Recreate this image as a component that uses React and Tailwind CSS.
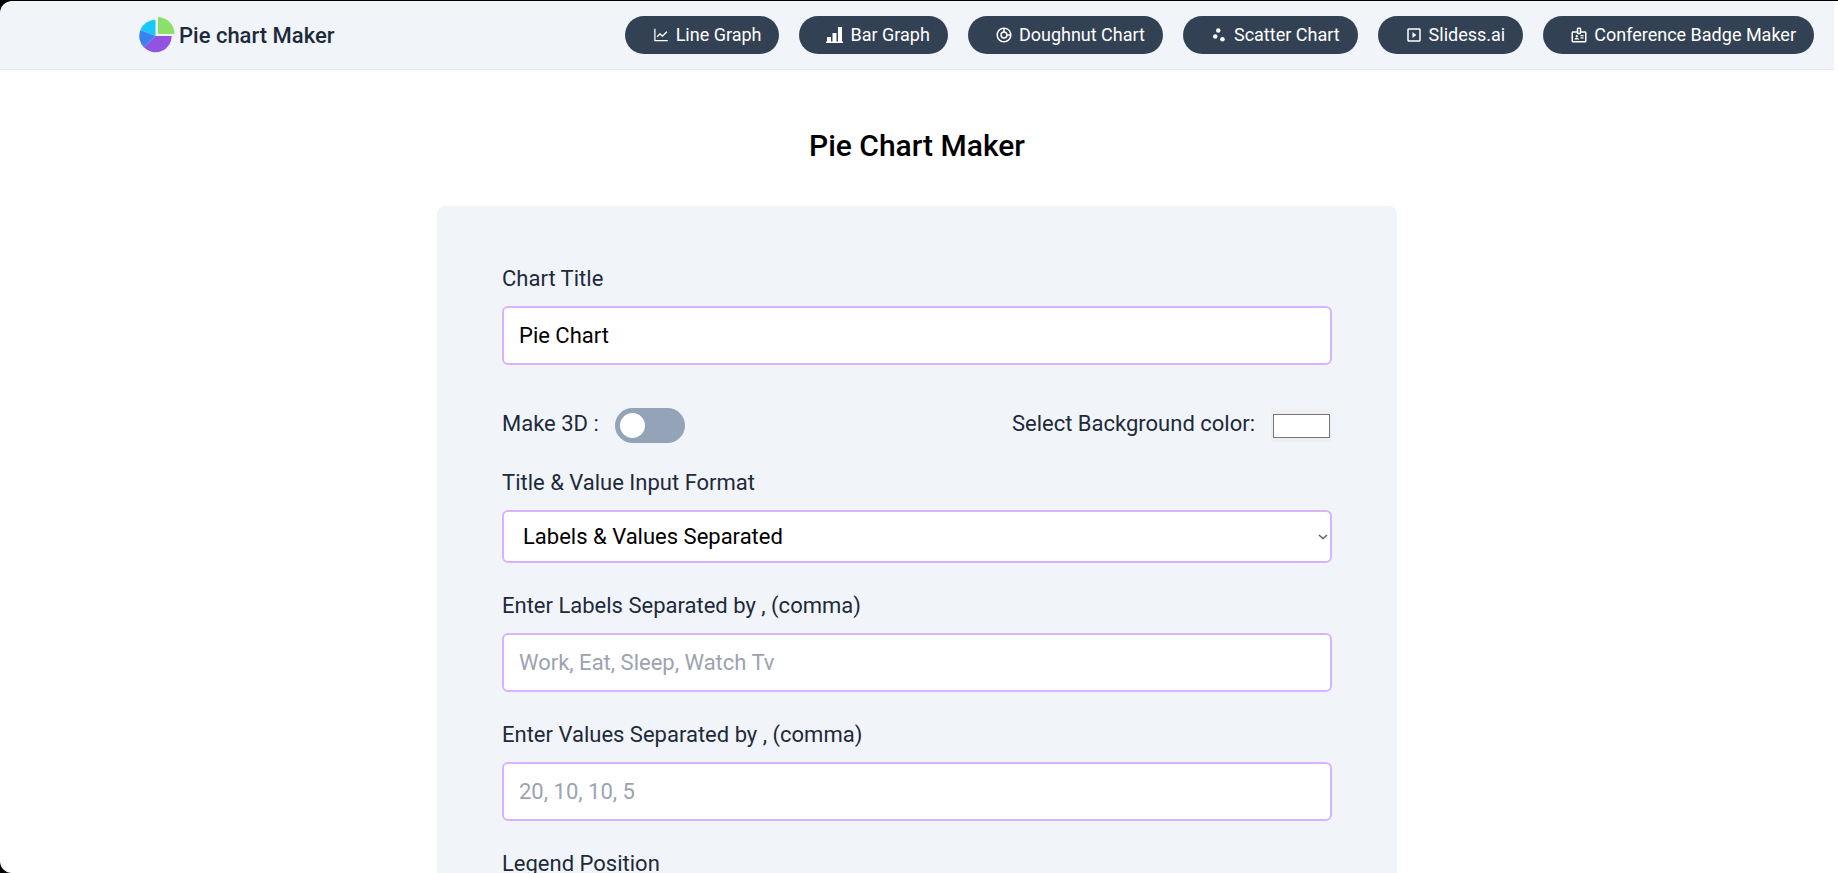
import { useState } from 'react';
import { AiOutlineLineChart } from 'react-icons/ai';
import { BiDoughnutChart } from 'react-icons/bi';
import { MdOutlineBadge, MdOutlineSlideshow, MdScatterPlot } from 'react-icons/md';

// ─── Icons ───────────────────────────────────────────────────────────────────
function BarsIcon({ size = 18 }) {
  return (
    <svg width={size} height={size} viewBox="0 0 18 18" fill="currentColor" aria-hidden="true">
      <path d="M0 15.500h17V17H0zM1 11h4v5H1zM6.500 7h4v9h-4zM12 1h4v15h-4z" />
    </svg>
  );
}

function PieLogo() {
  return (
    <svg width="36" height="36" viewBox="0 0 36 36" aria-hidden="true">
      <path d="M16.500 19V2.800A16.200 16.200 0 0 0 1.400 13z" fill="#18c8fb" />
      <path d="M16.500 19 1.400 13A16.200 16.200 0 0 0 5 30.500z" fill="#3b82f0" />
      <path d="M16.500 19 5 30.500A16.200 16.200 0 0 0 32.700 19z" fill="#9153e0" />
      <path d="M19 17V0A17 17 0 0 1 35.500 17z" fill="#8ce06a" />
    </svg>
  );
}

const NAV_LINKS = [
  { label: 'Line Graph', icon: AiOutlineLineChart },
  { label: 'Bar Graph', icon: BarsIcon },
  { label: 'Doughnut Chart', icon: BiDoughnutChart },
  { label: 'Scatter Chart', icon: MdScatterPlot },
  { label: 'Slidess.ai', icon: MdOutlineSlideshow },
  { label: 'Conference Badge Maker', icon: MdOutlineBadge },
];

// ─── Header ──────────────────────────────────────────────────────────────────
function Header() {
  return (
    <header className="flex items-center justify-between border-b border-slate-200 bg-slate-100 py-[15px] pr-5 pl-[139px]">
      <a href="#" className="flex items-center gap-1 text-[22px] font-medium text-[#1e293b]">
        <PieLogo />
        Pie chart Maker
      </a>
      <nav className="flex gap-5">
        {NAV_LINKS.map(({ label, icon: Icon }) => (
          <a
            key={label}
            href="#"
            className="flex h-[38px] items-center gap-1.5 rounded-full bg-[#334155] pr-[18px] pl-[27px] text-lg whitespace-nowrap text-white"
          >
            <Icon size={18} />
            {label}
          </a>
        ))}
      </nav>
    </header>
  );
}

// ─── Form fields ─────────────────────────────────────────────────────────────
function Field({ id, label, children }) {
  return (
    <div className="flex flex-col gap-[11px]">
      <label htmlFor={id} className="leading-8">{label}</label>
      {children}
    </div>
  );
}

function TextField({ id, label, ...props }) {
  return (
    <Field id={id} label={label}>
      <input
        id={id}
        type="text"
        className="h-[59px] w-full rounded-md border-2 border-[#d8b4fe] bg-white px-[15px] text-black placeholder:text-[#9ca3af]"
        {...props}
      />
    </Field>
  );
}

function SelectField({ id, label, options }) {
  return (
    <Field id={id} label={label}>
      <div className="relative">
        <select
          id={id}
          className="h-[53px] w-full appearance-none rounded-md border-2 border-[#d8b4fe] bg-white px-[19px] text-black"
        >
          {options.map((o) => <option key={o}>{o}</option>)}
        </select>
        <svg
          className="pointer-events-none absolute top-6 right-1"
          width="10"
          height="6"
          viewBox="0 0 10 6"
          fill="none"
          stroke="#5f5f5f"
          strokeWidth="1.500"
          aria-hidden="true"
        >
          <path d="M1 1l4 3.500L9 1" />
        </svg>
      </div>
    </Field>
  );
}

// ─── Page ────────────────────────────────────────────────────────────────────
export default function App() {
  const [title, setTitle] = useState('Pie Chart');
  const [is3D, setIs3D] = useState(false);
  const [background, setBackground] = useState('#ffffff');

  return (
    <div className="h-screen bg-black pt-px font-['Roboto',sans-serif]">
      <div className="h-full overflow-y-auto rounded-l-xl bg-white pr-1 [scrollbar-width:none]">
        <Header />
        <main className="flex flex-col items-center">
          <h1 className="mt-[58px] text-3xl font-medium text-black">Pie Chart Maker</h1>

          <form className="mt-[42px] w-full max-w-[960px] rounded-lg bg-slate-100 px-[65px] py-[57px] text-[22px] text-[#1e293b]">
            <TextField
              id="title"
              label="Chart Title"
              value={title}
              onChange={(e) => setTitle(e.target.value)}
            />

            <div className="mt-[43px] mb-6 flex h-[35px] items-center justify-between">
              <div className="flex items-center gap-4">
                <label htmlFor="make-3d" className="pb-1">Make 3D :</label>
                <input
                  id="make-3d"
                  type="checkbox"
                  role="switch"
                  checked={is3D}
                  onChange={(e) => setIs3D(e.target.checked)}
                  className="h-[35px] w-[70px] appearance-none rounded-full bg-[#94a3b8] p-[5px] before:block before:size-[25px] before:rounded-full before:bg-white checked:bg-purple-500 checked:before:ml-[35px]"
                />
              </div>
              <div className="flex items-center gap-4">
                <label htmlFor="background" className="pb-1">Select Background color:</label>
                <input
                  id="background"
                  type="color"
                  value={background}
                  onChange={(e) => setBackground(e.target.value)}
                  className="h-8 w-[61px] bg-[#efefef]"
                />
              </div>
            </div>

            <div className="flex flex-col gap-[27px]">
              <SelectField
                id="format"
                label="Title & Value Input Format"
                options={['Labels & Values Separated']}
              />
              <TextField id="labels" label="Enter Labels Separated by , (comma)" placeholder="Work, Eat, Sleep, Watch Tv" />
              <TextField id="values" label="Enter Values Separated by , (comma)" placeholder="20, 10, 10, 5" />
              <SelectField id="legend" label="Legend Position" options={['Right', 'Left', 'Top', 'Bottom']} />
            </div>
          </form>
        </main>
      </div>
    </div>
  );
}
